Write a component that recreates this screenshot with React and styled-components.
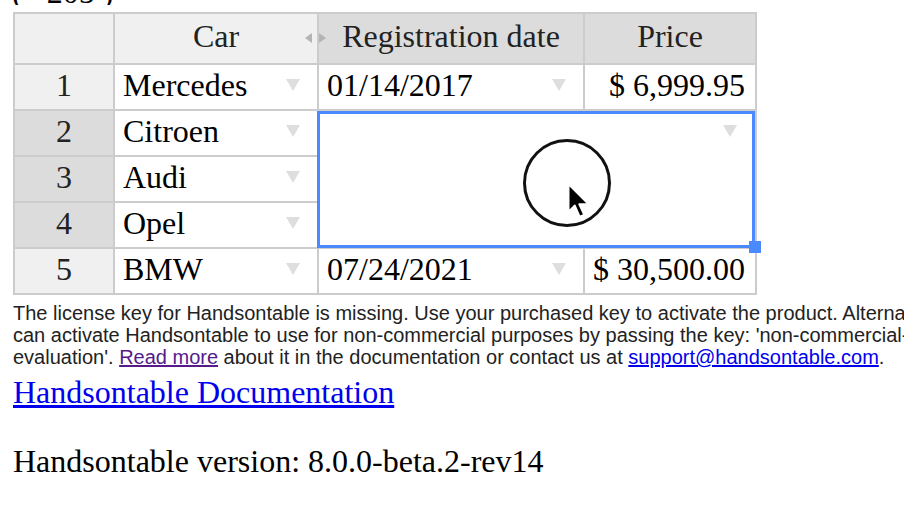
import React from 'react';
import styled, { createGlobalStyle } from 'styled-components';

//STYLE
const GlobalStyle = createGlobalStyle`
    html, body {
        margin: 0;
        padding: 0;
        overflow: hidden;
        background: #fff;
    }
    body {
        font-family: "Liberation Serif", "Times New Roman", serif;
        color: #000;
    }
`;

const Page = styled.div`
    padding: 0 13px;
    width: 1100px;
`;

const CutLine = styled.div`
    font-size: 32px;
    line-height: 32px;
    height: 5px;
    overflow: hidden;
    white-space: pre;
    margin-left: -1px;

    span{
        display: block;
        margin-top: -24px;
    }
`;

const TableWrap = styled.div`
    position: relative;
    margin-top: 7px;
    width: fit-content;
`;

const Grid = styled.div`
    display: grid;
    grid-template-columns: 98px 202px 264px 170px;
    grid-template-rows: 49px repeat(5, 44px);
    gap: 2px;
    padding: 2px;
    background: #cccccc;
    font-size: 32px;
`;

const HeadCell = styled.div`
    position: relative;
    background: ${({ active }) => (active ? '#dcdcdc' : '#f0f0f0')};
    color: #222;
    display: flex;
    align-items: center;
    justify-content: center;
    padding-bottom: 4px;
`;

const RowHead = styled(HeadCell)`
    color: #222;
`;

const Cell = styled.div`
    background: #fff;
    display: flex;
    align-items: center;
    justify-content: ${({ right }) => (right ? 'flex-end' : 'space-between')};
    padding: ${({ right }) => (right ? '0 10px 4px 8px' : '0 17px 4px 8px')};
    white-space: nowrap;
`;

const Merged = styled.div`
    grid-column: 3 / span 2;
    grid-row: 3 / span 3;
    background: #fff;
    border: 3px solid #4b89ff;
    margin: 0 0 -1px -2px;
    display: flex;
    justify-content: flex-end;
    align-items: flex-start;
    padding: 11px 15px 0 0;
`;

const Drop = styled.span`
    width: 0;
    height: 0;
    border-left: 7px solid transparent;
    border-right: 7px solid transparent;
    border-top: 12px solid #dedede;
    flex-shrink: 0;
`;

const Collapse = styled.span`
    position: absolute;
    top: 50%;
    margin-top: -6px;
    width: 0;
    height: 0;
    border-top: 5px solid transparent;
    border-bottom: 5px solid transparent;
    ${({ dir }) =>
        dir === 'left'
            ? 'right: 5px; border-right: 7px solid #b4b4b4;'
            : 'left: 0px; border-left: 7px solid #b4b4b4;'}
`;

const Handle = styled.div`
    position: absolute;
    left: 736px;
    top: 229px;
    width: 12px;
    height: 12px;
    background: #4b89ff;
`;

const Ring = styled.div`
    position: absolute;
    left: 510px;
    top: 127px;
    width: 88px;
    height: 88px;
    border: 3px solid #111;
    border-radius: 50%;
    box-sizing: border-box;
`;

const Pointer = styled.svg`
    position: absolute;
    left: 553px;
    top: 170px;
`;

const Notice = styled.div`
    width: 1005px;
    padding: 7px 0 6px 0;
    font-family: "Liberation Sans", Helvetica, Arial, sans-serif;
    font-size: 20px;
    line-height: 22px;
    color: #222;

    a{ color: #0000ee; }
    a.visited{ color: #551a8b; }
`;

const DocLink = styled.a`
    display: inline-block;
    font-size: 32px;
    color: #0000ee;
`;

const Version = styled.p`
    margin: 32px 0 0 0;
    font-size: 32px;
`;

const rows = [
    { n: 1, car: 'Mercedes', date: '01/14/2017', price: '$ 6,999.95' },
    { n: 2, car: 'Citroen' },
    { n: 3, car: 'Audi' },
    { n: 4, car: 'Opel' },
    { n: 5, car: 'BMW', date: '07/24/2021', price: '$ 30,500.00' },
];

const App = () => {
    return (
        <>
            <GlobalStyle />
            <Page>
                <CutLine><span>(   205 )</span></CutLine>

                <TableWrap>
                    <Grid>
                        <HeadCell />
                        <HeadCell>
                            Car
                            <Collapse dir="left" />
                        </HeadCell>
                        <HeadCell active>
                            <Collapse dir="right" />
                            Registration date
                        </HeadCell>
                        <HeadCell active>Price</HeadCell>

                        {rows.map((row) => (
                            <React.Fragment key={row.n}>
                                <RowHead active={row.n >= 2 && row.n <= 4}>{row.n}</RowHead>
                                <Cell>
                                    {row.car}
                                    <Drop />
                                </Cell>
                                {row.n === 2 && (
                                    <Merged>
                                        <Drop />
                                    </Merged>
                                )}
                                {row.date && (
                                    <>
                                        <Cell>
                                            {row.date}
                                            <Drop />
                                        </Cell>
                                        <Cell right>{row.price}</Cell>
                                    </>
                                )}
                            </React.Fragment>
                        ))}
                    </Grid>

                    <Handle />
                    <Ring />
                    <Pointer width="25" height="37" viewBox="0 0 20 30">
                        <path
                            d="M2 2 L2 24 L7 19 L11 28 L14.5 26.5 L10.5 18 L18 18 Z"
                            fill="#000"
                            stroke="#fff"
                            strokeWidth="1.4"
                            strokeLinejoin="round"
                        />
                    </Pointer>
                </TableWrap>

                <Notice>
                    The license key for Handsontable is missing. Use your purchased key to activate the product.
                    Alternatively, you can activate Handsontable to use for non-commercial purposes by passing the
                    key: 'non-commercial-and-evaluation'. <a className="visited" href="#">Read more</a> about it in
                    the documentation or contact us at <a href="#">support@handsontable.com</a>.
                </Notice>

                <DocLink href="#">Handsontable Documentation</DocLink>

                <Version>Handsontable version: 8.0.0-beta.2-rev14</Version>
            </Page>
        </>
    );
};

export default App;
